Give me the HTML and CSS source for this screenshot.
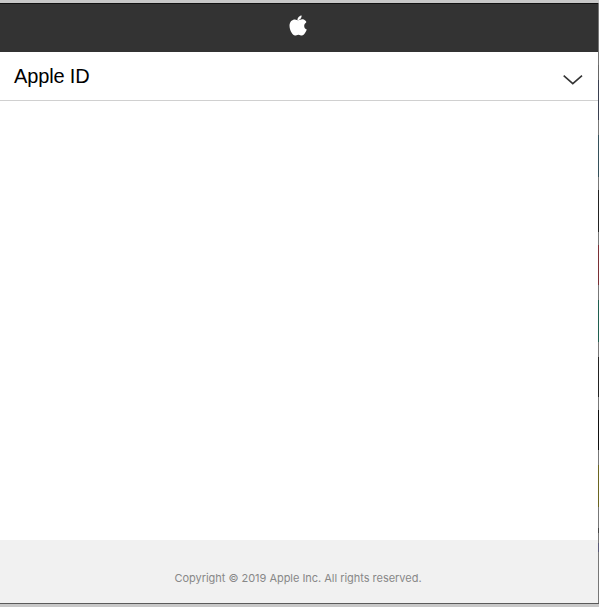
FILE: index.html
```html
<!DOCTYPE html>
<html lang="en">
<head>
    <meta charset="UTF-8">
    <title>Apple ID</title>
    <link rel="stylesheet" href="styles.css">
</head>
<body>
    <div id="page">
        <div id="main">
            <div id="topbar">
                <svg class="logo" width="18" height="22" viewBox="0 0 18 22">
                    <path d="M12.6 0.4c0.1 1.3-0.4 2.4-1.1 3.3-0.8 0.9-1.9 1.6-3.1 1.5-0.1-1.2 0.5-2.5 1.2-3.3 0.7-0.8 2-1.5 3-1.5z"/>
                    <path d="M17.2 7.6c-1.3 0.8-2 2-2 3.4 0 1.7 1 3 2.6 3.6-0.4 1.2-1 2.4-1.8 3.5-0.9 1.3-1.8 2.5-3.2 2.5-1.3 0-1.8-0.8-3.4-0.8s-2.1 0.8-3.4 0.8c-1.3 0-2.3-1.3-3.2-2.6-1.2-1.8-2.3-4.6-2.3-7.2 0-4.2 2.7-6.4 5.4-6.4 1.4 0 2.6 0.9 3.5 0.9 0.9 0 2.2-1 3.8-1 1.1 0 2.9 0.4 4 2.3z"/>
                </svg>
            </div>
            <div id="title">
                <span class="name">Apple ID</span>
                <svg class="arrow" width="20" height="10" viewBox="0 0 20 10">
                    <path d="M0.7 0.7L9.8 8.6L19 0.7"/>
                </svg>
            </div>
            <div id="content"></div>
            <div id="footer">Copyright © 2019 Apple Inc. All rights reserved.</div>
        </div>
        <div id="edge"></div>
    </div>
</body>
</html>
```

FILE: styles.css
```css
html,body{
    margin: 0;
    padding: 0;
    height: 100%;
    overflow: hidden;
}
body{
    background: #c8c8c8;
    font-family: "Liberation Sans", Arial, sans-serif;
}
#page{
    display: flex;
    width: 599px;
    height: 604px;
    box-sizing: border-box;
    border-top: 3px solid #c8c8c8;
    border-bottom: 1px solid #5a5a5a;
}
#main{
    display: flex;
    flex-direction: column;
    flex: 1;
    background: #fff;
}
/* strip of the window behind, showing down the right side */
#edge{
    width: 1px;
    background: linear-gradient(to bottom,
        #777 0, #777 62px,
        #666 62px, #666 77px,
        #3a4050 77px, #3a4050 117px,
        #777 117px, #777 132px,
        #35505a 132px, #35505a 174px,
        #777 174px, #777 187px,
        #222 187px, #222 229px,
        #777 229px, #777 242px,
        #7a2f35 242px, #7a2f35 282px,
        #777 282px, #777 297px,
        #1f5f4f 297px, #1f5f4f 339px,
        #777 339px, #777 354px,
        #222 354px, #222 394px,
        #777 394px, #777 407px,
        #111 407px, #111 447px,
        #777 447px, #777 462px,
        #6b6520 462px, #6b6520 504px,
        #777 504px, #777 525px,
        #444 525px, #444 530px,
        #777 530px, #777 540px,
        #5a5a78 540px, #5a5a78 549px,
        #777 549px);
}
#topbar{
    height: 49px;
    box-sizing: border-box;
    border-top: 1px solid #111;
    background: #333;
    display: flex;
    align-items: center;
    justify-content: center;
}
.logo{
    fill: #fff;
    margin: 0 2px 5px 0;
}
#title{
    height: 49px;
    box-sizing: border-box;
    border-bottom: 1px solid #d0d0d0;
    padding: 0 15px 0 14px;
    display: flex;
    align-items: center;
    justify-content: space-between;
}
.name{
    font-size: 20px;
    letter-spacing: -0.15px;
    color: #000;
}
.arrow{
    fill: none;
    stroke: #333;
    stroke-width: 1.6;
    margin-top: 7px;
}
#content{
    flex: 1;
}
#footer{
    height: 63px;
    box-sizing: border-box;
    padding: 31px 2px 0 0;
    background: #f1f1f1;
    text-align: center;
    font-family: Inter, "Liberation Sans", sans-serif;
    font-size: 11px;
    letter-spacing: -0.03px;
    color: #888;
}
```
